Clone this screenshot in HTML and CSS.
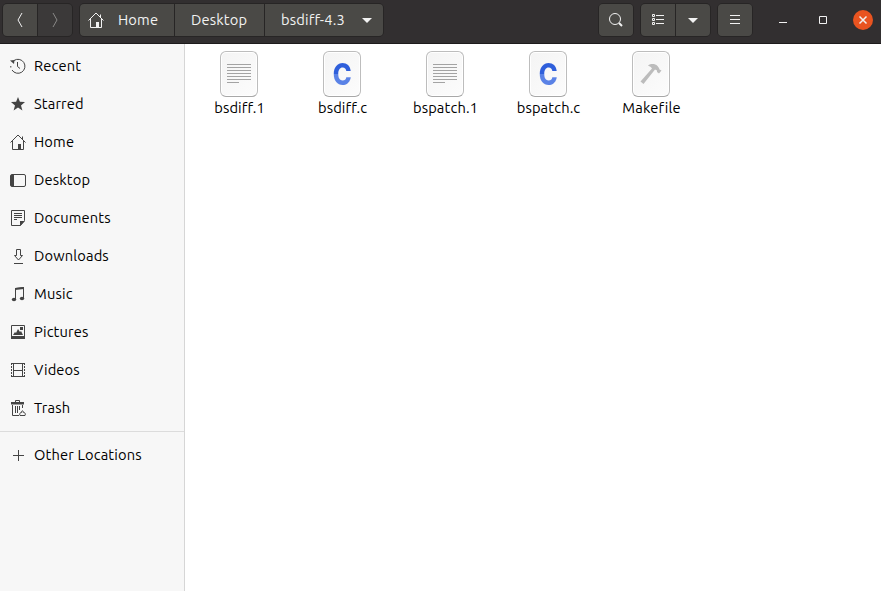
FILE: index.html
```html
<!DOCTYPE html>
<html lang="en">

<head>
    <meta charset="UTF-8">
    <meta name="viewport" content="width=device-width, initial-scale=1.0">
    <title>bsdiff-4.3</title>
    <link rel="stylesheet" href="styles.css">
</head>

<body>
    <!-- shared icons -->
    <svg class="defs" width="0" height="0">
        <symbol id="icon-home" viewBox="0 0 16 16">
            <path d="M.5 8.500L8 1l7.500 7.500M2.500 7v8.500h11V7M12.500 5V2.500" fill="none" stroke="currentColor" />
            <path d="M8 10h3v5.500H8z" fill="currentColor" stroke="none" />
        </symbol>
        <symbol id="icon-text" viewBox="0 0 24 20">
            <path d="M0 .5h24M0 3.500h24M0 6.500h24M0 9.500h24M0 12.500h24M0 15.500h24M0 18.500h12" stroke="#a3a3a3" fill="none" />
        </symbol>
    </svg>

    <div class="header">
        <div class="group nav">
            <div class="btn"><svg width="16" height="16"><path d="M10 1L6 8l4 7" /></svg></div>
            <div class="btn disabled"><svg width="16" height="16"><path d="M6 1l4 7-4 7" /></svg></div>
        </div>
        <div class="group path">
            <div class="btn path-home"><svg width="16" height="16"><use href="#icon-home" /></svg><span>Home</span></div>
            <div class="btn path-desktop"><span>Desktop</span></div>
            <div class="btn path-current"><span>bsdiff-4.3</span><i class="arrow"></i></div>
        </div>
        <div class="group search">
            <div class="btn"><svg width="16" height="16"><circle cx="7" cy="7" r="5.500" /><path d="M11 11l3 3" stroke-width="2" /></svg></div>
        </div>
        <div class="group view">
            <div class="btn">
                <svg width="16" height="16"><path d="M2.500 2.500h2v2h-2zM2.500 6.500h2v2h-2zM2.500 10.500h2v2h-2zM6 3.500h8M6 7.500h8M6 11.500h8" /></svg>
            </div>
            <div class="btn"><i class="arrow"></i></div>
        </div>
        <div class="group menu">
            <div class="btn"><svg width="16" height="16"><path d="M3 3.500h10M3 7.500h10M3 11.500h10" /></svg></div>
        </div>
        <div class="controls">
            <svg width="20" height="20"><path d="M6 12.500h8" /></svg>
            <svg width="20" height="20"><path d="M6.500 6.500h7v7h-7z" /></svg>
            <svg class="close" width="20" height="20"><path d="M6.500 6.500l7 7M13.500 6.500l-7 7" /></svg>
        </div>
    </div>

    <div class="main">
        <div class="sidebar">
            <div class="item">
                <svg width="16" height="16"><path d="M4 2.500A7 7 0 1 1 2 12M.8 9.500V8M7.500 4v4.500l2.500 2" /><path class="fill" d="M0 2.500l4.500-.5-.5 4z" /></svg>
                <span>Recent</span>
            </div>
            <div class="item">
                <svg width="16" height="16"><path class="fill" d="M8 1l1.900 4.800 5.100.3-4 3.300 1.400 5L8 11.600l-4.400 2.800 1.400-5-4-3.300 5.100-.3z" /></svg>
                <span>Starred</span>
            </div>
            <div class="item">
                <svg width="16" height="16"><use href="#icon-home" /></svg>
                <span>Home</span>
            </div>
            <div class="item">
                <svg width="16" height="16"><rect x=".5" y="2.500" width="15" height="12" rx="1.500" /><path class="fill" d="M1 3h3v11H1z" /></svg>
                <span>Desktop</span>
            </div>
            <div class="item">
                <svg width="16" height="16"><path d="M1.500.5h13v10l-4 5h-9zM4 3.500h8M4 5.500h8M4 7.500h8M4 9.500h3" /><path class="fill" d="M10 11h5l-5 5z" /></svg>
                <span>Documents</span>
            </div>
            <div class="item">
                <svg width="16" height="16"><path d="M6.500 1.500h4v6h2l-4 4.500-4-4.500h2zM4 15.500h9" /></svg>
                <span>Downloads</span>
            </div>
            <div class="item">
                <svg width="16" height="16"><path d="M5.500 13V2.500l8-1V12" /><path class="fill" d="M5 2l9-1v2L5 4z" /><ellipse class="fill" cx="4" cy="13.500" rx="2.200" ry="1.800" /><ellipse class="fill" cx="12" cy="12.500" rx="2.200" ry="1.800" /></svg>
                <span>Music</span>
            </div>
            <div class="item">
                <svg width="16" height="16"><path d="M1.500 1.500h13v12h-13z" /><path class="fill" d="M1 12h14v3H1zM3 11l2-3 1 1 2-4 2 3 1-1 2 4zM10 3h3v3h-3z" /></svg>
                <span>Pictures</span>
            </div>
            <div class="item">
                <svg width="16" height="16"><path d="M3.500 1.500h9v13h-9zM3 8.500h10" /><path d="M1.500 1v14M14.500 1v14" stroke-dasharray="2 1" /><path d="M1 1.500h14M1 14.500h14" /></svg>
                <span>Videos</span>
            </div>
            <div class="item">
                <svg width="16" height="16"><path d="M5.500 2.500v-2h4v2M2.500 5v10.500H9M12.500 5v3M5.500 6v7M7.500 6v7M9.500 6v4" /><path d="M10 15.500c-1-2 .3-3 1.800-3.200-.8-2 1.700-2 1.500 0 1.500.2 2.700 1.200 1.700 3.200z" /><path class="fill" d="M1 2h13v2.500H1z" /></svg>
                <span>Trash</span>
            </div>
            <div class="line"></div>
            <div class="item">
                <svg width="16" height="16"><path d="M3 8.500h11M8.500 3v11" /></svg>
                <span>Other Locations</span>
            </div>
        </div>

        <div class="files">
            <div class="file">
                <div class="page"><svg width="24" height="20"><use href="#icon-text" /></svg></div>
                <span>bsdiff.1</span>
            </div>
            <div class="file">
                <div class="page"><b>C</b></div>
                <span>bsdiff.c</span>
            </div>
            <div class="file">
                <div class="page"><svg width="24" height="20"><use href="#icon-text" /></svg></div>
                <span>bspatch.1</span>
            </div>
            <div class="file">
                <div class="page"><b>C</b></div>
                <span>bspatch.c</span>
            </div>
            <div class="file">
                <div class="page">
                    <svg width="22" height="22"><path d="M8 2.500c3-2 7-2 9.500.5l1.500 2 .5 1.500 2 1-2.500 3-2-1.500v-1.500l-2-1L3.500 21 .5 18.500 12 5.500c-1-1.500-2-2-4-3z" fill="#bcbcbc" /></svg>
                </div>
                <span>Makefile</span>
            </div>
        </div>
    </div>
</body>

</html>
```
FILE: styles.css
```css
body {
    margin: 0;
    height: 591px;
    overflow: hidden;
    display: flex;
    flex-direction: column;
    font-family: Ubuntu, "Noto Sans", sans-serif;
    font-size: 14.667px;
    letter-spacing: .15px;
    line-height: 20px;
    color: #000;
    background: #fff;
}

svg {
    display: block;
    flex: none;
    fill: none;
    stroke: currentColor;
}

.defs {
    position: absolute;
}

.fill {
    fill: currentColor;
    stroke: none;
}

/* header bar */
.header {
    display: flex;
    box-sizing: border-box;
    height: 44px;
    padding: 3px 8px 0 2px;
    background: #322f30;
    border-bottom: 1px solid #1d1b1c;
    color: #f2f2f2;
}

.group {
    display: flex;
    gap: 1px;
    height: 32px;
    border: 1px solid #272525;
    border-radius: 5px;
    background: #272525;
    overflow: hidden;
}

.btn {
    display: flex;
    align-items: center;
    justify-content: center;
    width: 34px;
    background: #4a4946;
}

.disabled {
    background: #3b3939;
    color: #8a8988;
}

.path {
    margin-left: 6px;
}

.path .btn {
    box-sizing: border-box;
    justify-content: flex-start;
}

.path-home {
    width: 94px;
    padding-left: 8px;
    gap: 14px;
}

.path-desktop {
    width: 89px;
    padding-left: 16px;
}

.path-current {
    width: 118px;
    padding-left: 16px;
    gap: 17px;
}

.arrow {
    border: 5px solid transparent;
    border-top-color: #f2f2f2;
    border-bottom: 0;
}

.search {
    margin-left: auto;
}

.view,
.menu {
    margin-left: 6px;
}

.controls {
    display: flex;
    gap: 20px;
    margin: 7px 0 0 20px;
}

.close {
    border-radius: 50%;
    background: #e95420;
    stroke-width: 1.5;
}

/* sidebar */
.main {
    display: flex;
    flex: 1;
}

.sidebar {
    width: 184px;
    padding-top: 3px;
    background: #f7f7f7;
    border-right: 1px solid #d6d6d6;
}

.item {
    display: flex;
    align-items: center;
    gap: 8px;
    height: 38px;
    padding-left: 10px;
}

.item svg {
    color: #444;
}

.line {
    height: 1px;
    margin: 4px 0;
    background: #dcdcdc;
}

/* files */
.files {
    display: flex;
    align-items: flex-start;
    padding: 7px 0 0 3px;
}

.file {
    display: flex;
    flex-direction: column;
    align-items: center;
    gap: 1px;
    width: 103px;
}

.page {
    display: flex;
    align-items: center;
    justify-content: center;
    box-sizing: border-box;
    width: 38px;
    height: 46px;
    margin-right: 1px;
    border: 1px solid #bdbdbd;
    border-bottom-color: #a8a8a8;
    border-radius: 6px;
    background: linear-gradient(135deg, #f4f4f4, #fcfcfc);
    box-shadow: inset 0 0 0 1px #fff;
}

.page svg {
    stroke: none;
}

.page b {
    font: 800 30px/30px Inter, sans-serif;
    letter-spacing: 0;
    transform: scaleX(.85);
    color: transparent;
    background: linear-gradient(#2f5fdb 50%, #5a82e6 50%);
    background-clip: text;
    -webkit-background-clip: text;
}
```
